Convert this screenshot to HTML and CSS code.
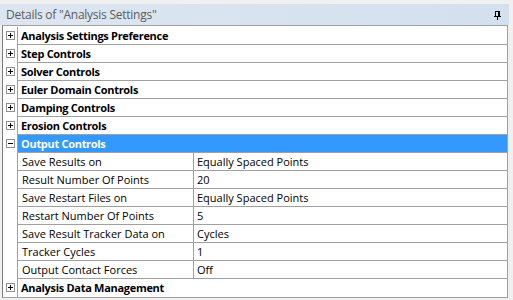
FILE: index.html
```html
<!DOCTYPE html>
<html lang="en">
<head>
  <meta charset="UTF-8">
  <title>Details of "Analysis Settings"</title>
  <link rel="stylesheet" href="styles.css">
</head>
<body>
  <div class="pane">
    <div class="titlebar">
      <span class="title">Details of "Analysis Settings"</span>
      <svg class="pin" width="7" height="9" viewBox="0 0 7 9" shape-rendering="crispEdges">
        <rect x="1" y="0" width="5" height="1"/>
        <rect x="1" y="0" width="1" height="5"/>
        <rect x="4" y="0" width="2" height="5"/>
        <rect x="0" y="5" width="7" height="1"/>
        <rect x="3" y="6" width="1" height="3"/>
      </svg>
    </div>

    <div class="grid">
      <div class="row"><span class="tog"><i class="box plus"></i></span><div class="cell group">Analysis Settings Preference</div></div>
      <div class="row"><span class="tog"><i class="box plus"></i></span><div class="cell group">Step Controls</div></div>
      <div class="row"><span class="tog"><i class="box plus"></i></span><div class="cell group">Solver Controls</div></div>
      <div class="row"><span class="tog"><i class="box plus"></i></span><div class="cell group">Euler Domain Controls</div></div>
      <div class="row"><span class="tog"><i class="box plus"></i></span><div class="cell group">Damping Controls</div></div>
      <div class="row"><span class="tog"><i class="box plus"></i></span><div class="cell group">Erosion Controls</div></div>
      <div class="row"><span class="tog"><i class="box"></i></span><div class="cell group selected">Output Controls</div></div>
      <div class="row"><span class="tog"></span><div class="cell"><span class="key">Save Results on</span><span class="val">Equally Spaced Points</span></div></div>
      <div class="row"><span class="tog"></span><div class="cell"><span class="key">Result Number Of Points</span><span class="val">20</span></div></div>
      <div class="row"><span class="tog"></span><div class="cell"><span class="key">Save Restart Files on</span><span class="val">Equally Spaced Points</span></div></div>
      <div class="row"><span class="tog"></span><div class="cell"><span class="key">Restart Number Of Points</span><span class="val">5</span></div></div>
      <div class="row"><span class="tog"></span><div class="cell"><span class="key">Save Result Tracker Data on</span><span class="val">Cycles</span></div></div>
      <div class="row"><span class="tog"></span><div class="cell"><span class="key">Tracker Cycles</span><span class="val">1</span></div></div>
      <div class="row"><span class="tog"></span><div class="cell"><span class="key">Output Contact Forces</span><span class="val">Off</span></div></div>
      <div class="row"><span class="tog"><i class="box plus"></i></span><div class="cell group">Analysis Data Management</div></div>
    </div>
  </div>
</body>
</html>
```

FILE: styles.css
```css
/* base */
* {
  margin: 0;
  padding: 0;
  box-sizing: border-box;
}
body {
  font-family: 'Open Sans', 'Liberation Sans', sans-serif;
  font-size: 11px;
  color: #000;
  background: #f0f0f0;
  padding-top: 4px;
}
.pane {
  width: 510px;
}
/* title bar */
.titlebar {
  width: 509px;
  height: 21px;
  display: flex;
  align-items: center;
  justify-content: space-between;
  padding: 0 8px 0 6px;
  background: linear-gradient(to right, #dde6f0, #d3e0ee);
}
.title {
  font-size: 12px;
  letter-spacing: -0.25px;
  color: #5c5c5c;
  padding-bottom: 1px;
}
.pin {
  fill: #000;
  margin-top: 1px;
}
/* property grid */
.grid {
  width: 506px;
  margin-left: 2px;
  padding-top: 1px;
  background: #fff;
  border: 1px solid #a0a0a0;
  border-left-color: #7d7d7d;
}
.row {
  display: flex;
  height: 18px;
}
.tog {
  width: 14px;
  display: flex;
  align-items: center;
  justify-content: center;
  padding-bottom: 1px;
}
.box {
  position: relative;
  width: 9px;
  height: 9px;
  border: 1px solid #909090;
  background: #fff;
}
.box::before {
  content: "";
  position: absolute;
  left: 1px;
  top: 3px;
  width: 5px;
  height: 1px;
  background: #000;
}
.box.plus::after {
  content: "";
  position: absolute;
  left: 3px;
  top: 1px;
  width: 1px;
  height: 5px;
  background: #000;
}
.cell {
  flex: 1;
  display: flex;
  border-left: 1px solid #a0a0a0;
  border-bottom: 1px solid #a0a0a0;
  line-height: 17px;
  white-space: nowrap;
}
.row:last-child .cell {
  border-bottom: none;
}
.group {
  font-weight: 700;
  letter-spacing: -0.3px;
  padding-left: 3px;
}
.selected {
  background: #3399ff;
  color: #fff;
}
.key {
  width: 176px;
  padding-left: 4px;
  border-right: 1px solid #a0a0a0;
}
.val {
  padding-left: 3px;
}
```
